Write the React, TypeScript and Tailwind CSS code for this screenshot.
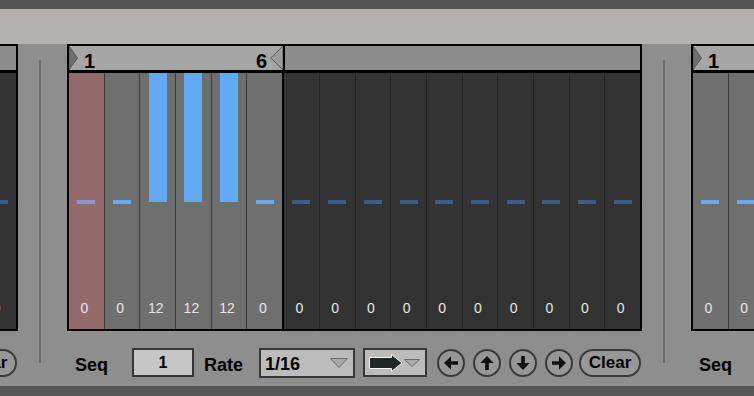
import clsx from 'clsx';

type PanelProps = {
  values: number[];
  loop: number;
  playing?: number;
  showEnd?: boolean;
  headerColor?: string;
};

const BAR_ZONE = 129;

function Column({ value, inLoop, playing, boundary, first }: { value: number; inLoop: boolean; playing: boolean; boundary: boolean; first: boolean }) {
  const h = Math.round((value / 12) * BAR_ZONE);
  return (
    <div
      className={clsx(
        'relative flex-1 flex flex-col justify-end items-center pb-[12px]',
        playing ? 'bg-[#956a6a]' : inLoop ? 'bg-[#6f6f6f]' : 'bg-[#333333]',
        first ? '' : boundary ? 'border-l-2 border-black' : inLoop ? 'border-l border-[#3a3a3a]' : 'border-l border-[#222222]'
      )}
    >
      {value > 0 ? (
        <div className="absolute left-1/2 -translate-x-1/2 w-[18px] bg-[#64a9f6]" style={{ top: BAR_ZONE - h, height: h }} />
      ) : (
        <div
          className={clsx(
            'absolute left-1/2 -translate-x-1/2 top-[127px] h-[4px] w-[18px]',
            playing ? 'bg-[#8c93d6]' : inLoop ? 'bg-[#64a9f6]' : 'bg-[#3d5d89]'
          )}
        />
      )}
      <span className="pr-[4px] text-[14px] leading-[18px] text-[#e6e6e6]">{value}</span>
    </div>
  );
}

function ArrowIcon({ rotate }: { rotate: number }) {
  return (
    <svg width="14" height="14" viewBox="0 0 12 12" style={{ transform: `rotate(${rotate}deg)` }}>
      <path d="M0 6 L6 0.3 L6 4.4 L12 4.4 L12 7.6 L6 7.6 L6 11.7 Z" fill="#111" />
    </svg>
  );
}

function Controls() {
  return (
    <div className="mt-[17px] flex h-[29px] items-center text-black">
      <div className="w-[65px] pl-[8px] pt-[4px] text-[18px] font-bold leading-none">Seq</div>
      <div className="flex h-[29px] w-[62px] items-center justify-center border-2 border-[#343434] bg-[#c6c6c6] text-[16px] font-bold leading-none">
        1
      </div>
      <div className="w-[65px] pl-[10px] pt-[4px] text-[18px] font-bold leading-none">Rate</div>
      <div className="flex h-[30px] w-[96px] items-center justify-between border-2 border-[#383838] bg-[#bcbcbc] pl-[4px] pr-[5px]">
        <span className="pt-[2px] text-[18px] font-bold leading-none">1/16</span>
        <svg width="18" height="10" viewBox="0 0 18 10">
          <polygon points="0.5,0.5 17.5,0.5 9,9.5" fill="#a9a9a9" stroke="#6c6c6c" />
        </svg>
      </div>
      <div className="ml-[8px] flex h-[29px] w-[64px] items-center border-2 border-[#383838] bg-[#bcbcbc] pl-[4px]">
        <svg width="34" height="18" viewBox="0 0 34 18">
          <path d="M0.5 3.5 H22.5 V0.5 L33 9 L22.5 17.5 V14.5 H0.5 Z" fill="#1d2828" stroke="#f4f4f4" strokeWidth="1" />
        </svg>
        <svg width="16" height="8" viewBox="0 0 16 8" className="ml-[1px]">
          <polygon points="0.5,0.5 15.5,0.5 8,7.5" fill="#a9a9a9" stroke="#6c6c6c" />
        </svg>
      </div>
      <div className="ml-[10px] flex gap-[8px]">
        {[0, 90, 270, 180].map((r) => (
          <div key={r} className="flex h-[28px] w-[28px] items-center justify-center rounded-full border-2 border-[#3a3a3a] bg-[#979797]">
            <ArrowIcon rotate={r} />
          </div>
        ))}
      </div>
      <div className="ml-[6px] flex h-[28px] w-[62px] items-center justify-center rounded-full border-2 border-[#3a3a3a] bg-[#979797] text-[17px] font-bold leading-none">
        Clear
      </div>
    </div>
  );
}

function Panel({ values, loop, playing = -1, showEnd = true, headerColor = '#a6a6a6' }: PanelProps) {
  return (
    <div className="flex w-[575px] shrink-0 flex-col">
      <div className="flex h-[287px] flex-col border-2 border-black">
        <div className="flex h-[27px] border-b-[3px] border-black">
          <div
            className="relative flex w-[216px] items-start justify-between border-r-2 border-black pl-[15px] pr-[16px] pt-[5px] text-[20px] font-bold leading-none text-black"
            style={{ backgroundColor: headerColor }}
          >
            <svg width="9" height="24" viewBox="0 0 9 24" className="absolute left-0 top-0">
              <polygon points="0,0 8.5,12 0,24" fill="#6e6e6e" stroke="#5a5a5a" />
            </svg>
            <span>1</span>
            {showEnd && <span>{loop}</span>}
            {showEnd && (
              <svg width="13" height="24" viewBox="0 0 13 24" className="absolute right-0 top-0">
                <polygon points="13,0 0.8,12 13,24" fill="#9b9b9b" stroke="#5c5c5c" />
              </svg>
            )}
          </div>
          <div className="flex-1 bg-[#8c8c8c]" />
        </div>
        <div className="flex flex-1">
          {values.map((v, i) => (
            <Column key={i} value={v} inLoop={i < loop} playing={i === playing} boundary={i === loop} first={i === 0} />
          ))}
        </div>
      </div>
      <Controls />
    </div>
  );
}

function Divider() {
  return (
    <div className="w-[49px] shrink-0 pl-[21px]">
      <div className="mt-[16px] h-[303px] w-[2px] bg-[#6a6a6a]" />
    </div>
  );
}

const zeros = Array.from({ length: 16 }, () => 0);
const main = [0, 0, 12, 12, 12, 0, 0, 0, 0, 0, 0, 0, 0, 0, 0, 0];

export default function App() {
  return (
    <div className="flex h-[396px] w-[754px] flex-col overflow-hidden font-['Liberation_Sans',Arial,sans-serif]">
      <div className="h-[9px] shrink-0 bg-[#545454]" />
      <div className="h-[35px] shrink-0 bg-[#b5b1ae]" />
      <div className="flex h-[342px] shrink-0 bg-[#8e8e8e]">
        <div className="ml-[-557px] flex">
          <Panel values={zeros} loop={0} headerColor="#a0a0a0" showEnd={false} />
          <Divider />
          <Panel values={main} loop={6} playing={0} />
          <Divider />
          <Panel values={zeros} loop={8} showEnd={false} />
        </div>
      </div>
      <div className="h-[10px] shrink-0 bg-[#575757]" />
    </div>
  );
}
